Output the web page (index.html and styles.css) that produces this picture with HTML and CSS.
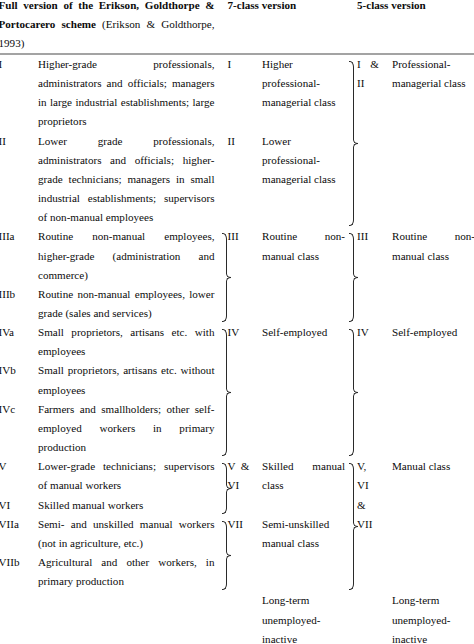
FILE: index.html
```html
<!DOCTYPE html>
<html lang="en">
<head>
<meta charset="utf-8">
<title>Erikson-Goldthorpe class schemes</title>
<link rel="stylesheet" href="styles.css">
</head>
<body>
<div class="table">
  <div class="cell hd h1 r1"><b>Full version of the Erikson, Goldthorpe &amp; Portocarero scheme</b> (Erikson &amp; Goldthorpe, 1993)</div>
  <div class="cell hd h7 r1"><b>7-class version</b></div>
  <div class="cell hd h5 r1"><b>5-class version</b></div>
  <div class="rule"></div>

  <div class="cell k1 r3">I</div>
  <div class="cell d r3">Higher-grade professionals, administrators and officials; managers in large industrial establishments; large proprietors</div>
  <div class="cell k7 r3">I</div>
  <div class="cell t7 r3">Higher professional-managerial class</div>
  <div class="brace b5 r3 s2"><i class="bt"></i><i class="bl"></i><i class="bm"></i><i class="bl"></i><i class="bb"></i></div>
  <div class="cell k5 r3 s2">I &amp; II</div>
  <div class="cell t5 r3 s2">Professional-managerial class</div>

  <div class="cell k1 r4">II</div>
  <div class="cell d r4">Lower grade professionals, administrators and officials; higher-grade technicians; managers in small industrial establishments; supervisors of non-manual employees</div>
  <div class="cell k7 r4">II</div>
  <div class="cell t7 r4">Lower professional-managerial class</div>

  <div class="cell k1 r5">IIIa</div>
  <div class="cell d r5">Routine non-manual employees, higher-grade (administration and commerce)</div>
  <div class="brace b7 r5 s2"><i class="bt"></i><i class="bl"></i><i class="bm"></i><i class="bl"></i><i class="bb"></i></div>
  <div class="cell k7 r5 s2">III</div>
  <div class="cell t7 r5 s2">Routine non-manual class</div>
  <div class="brace b5 r5 s2"><i class="bt"></i><i class="bl"></i><i class="bm"></i><i class="bl"></i><i class="bb"></i></div>
  <div class="cell k5 r5 s2">III</div>
  <div class="cell t5 r5 s2">Routine non-manual class</div>

  <div class="cell k1 r6">IIIb</div>
  <div class="cell d r6">Routine non-manual employees, lower grade (sales and services)</div>

  <div class="cell k1 r7">IVa</div>
  <div class="cell d r7">Small proprietors, artisans etc. with employees</div>
  <div class="brace b7 r7 s3"><i class="bt"></i><i class="bl"></i><i class="bm"></i><i class="bl"></i><i class="bb"></i></div>
  <div class="cell k7 r7 s3">IV</div>
  <div class="cell t7 r7 s3">Self-employed</div>
  <div class="brace b5 r7 s3"><i class="bt"></i><i class="bl"></i><i class="bm"></i><i class="bl"></i><i class="bb"></i></div>
  <div class="cell k5 r7 s3">IV</div>
  <div class="cell t5 r7 s3">Self-employed</div>

  <div class="cell k1 r8">IVb</div>
  <div class="cell d r8">Small proprietors, artisans etc. without employees</div>

  <div class="cell k1 r9">IVc</div>
  <div class="cell d r9">Farmers and smallholders; other self-employed workers in primary production</div>

  <div class="cell k1 r10">V</div>
  <div class="cell d r10">Lower-grade technicians; supervisors of manual workers</div>
  <div class="brace b7 r10 s2"><i class="bt"></i><i class="bl"></i><i class="bm"></i><i class="bl"></i><i class="bb"></i></div>
  <div class="cell k7 r10 s2">V &amp; VI</div>
  <div class="cell t7 r10 s2">Skilled manual class</div>
  <div class="brace b5 r10 s4"><i class="bt"></i><i class="bl"></i><i class="bm"></i><i class="bl"></i><i class="bb"></i></div>
  <div class="cell k5 r10 s4">V, VI &amp; VII</div>
  <div class="cell t5 r10 s4">Manual class</div>

  <div class="cell k1 r11">VI</div>
  <div class="cell d r11">Skilled manual workers</div>

  <div class="cell k1 r12">VIIa</div>
  <div class="cell d r12">Semi- and unskilled manual workers (not in agriculture, etc.)</div>
  <div class="brace b7 r12 s2"><i class="bt"></i><i class="bl"></i><i class="bm"></i><i class="bl"></i><i class="bb"></i></div>
  <div class="cell k7 r12 s2">VII</div>
  <div class="cell t7 r12 s2">Semi-unskilled manual class</div>

  <div class="cell k1 r13">VIIb</div>
  <div class="cell d r13">Agricultural and other workers, in primary production</div>

  <div class="cell t7 r14">Long-term unemployed-inactive</div>
  <div class="cell t5 r14">Long-term unemployed-inactive</div>
</div>
</body>
</html>
```
FILE: styles.css
```css
html, body {
  margin: 0;
  padding: 0;
  background: #ffffff;
}

body {
  width: 474px;
  height: 644px;
  overflow: hidden;
  font-family: "Liberation Serif", "Times New Roman", serif;
  font-size: 11.1px;
  line-height: 19.15px;
  color: #0c0c0c;
}

.table {
  display: grid;
  grid-template-columns: 39.5px 176.5px 13px 34.5px 83px 12px 35px 83px;
  margin: -4px 0 0 -1.5px;
}

.cell {
  text-align: justify;
}

.hd b {
  font-weight: bold;
}

.h1 { grid-column: 1 / 3; }
.h7 { grid-column: 4 / 6; text-align: left; }
.h5 { grid-column: 7 / 9; text-align: left; }

.rule {
  grid-column: 1 / -1;
  grid-row: 2;
  height: 1.5px;
  background: #a3a3a3;
  margin-left: 1.5px;
}

.k1 { grid-column: 1; text-align: left; }
.d  { grid-column: 2; }
.b7 { grid-column: 3; margin-left: 7px; }
.k7 { grid-column: 4; padding-right: 12.5px; }
.t7 { grid-column: 5; }
.b5 { grid-column: 6; margin-left: 3.5px; }
.k5 { grid-column: 7; padding-right: 13px; }
.t5 { grid-column: 8; }

.r1  { grid-row-start: 1; }
.r3  { grid-row-start: 3; }
.r4  { grid-row-start: 4; }
.r5  { grid-row-start: 5; }
.r6  { grid-row-start: 6; }
.r7  { grid-row-start: 7; }
.r8  { grid-row-start: 8; }
.r9  { grid-row-start: 9; }
.r10 { grid-row-start: 10; }
.r11 { grid-row-start: 11; }
.r12 { grid-row-start: 12; }
.r13 { grid-row-start: 13; }
.r14 { grid-row-start: 14; }

.s2 { grid-row-end: span 2; }
.s3 { grid-row-end: span 3; }
.s4 { grid-row-end: span 4; }

/* curly brace built from stroke pieces */
.brace {
  display: flex;
  flex-direction: column;
  width: 11px;
  margin-top: 6px;
  margin-bottom: 1px;
  justify-self: start;
}

.brace i {
  display: block;
  box-sizing: border-box;
  border-color: #2a2a2a;
  border-style: solid;
  border-width: 0;
}

.brace .bt {
  width: 5.2px;
  height: 6px;
  border-top-width: 1.2px;
  border-right-width: 1.2px;
  border-top-right-radius: 4px 6px;
}

.brace .bl {
  flex: 1;
  margin-left: 4px;
  border-left-width: 1.2px;
}

.brace .bm {
  height: 9px;
  margin-left: 4px;
  width: 5.5px;
  display: flex;
  flex-direction: column;
}

.brace .bm::before,
.brace .bm::after {
  content: "";
  display: block;
  box-sizing: border-box;
  width: 5.5px;
  height: 5px;
  border: 0 solid #2a2a2a;
}

.brace .bm::before {
  border-left-width: 1.2px;
  border-bottom-width: 1.2px;
  border-bottom-left-radius: 5.5px 5px;
}

.brace .bm::after {
  border-left-width: 1.2px;
  border-top-width: 1.2px;
  border-top-left-radius: 5.5px 5px;
  margin-top: -1.2px;
}

.brace .bb {
  width: 5.2px;
  height: 6px;
  border-bottom-width: 1.2px;
  border-right-width: 1.2px;
  border-bottom-right-radius: 4px 6px;
}
```
